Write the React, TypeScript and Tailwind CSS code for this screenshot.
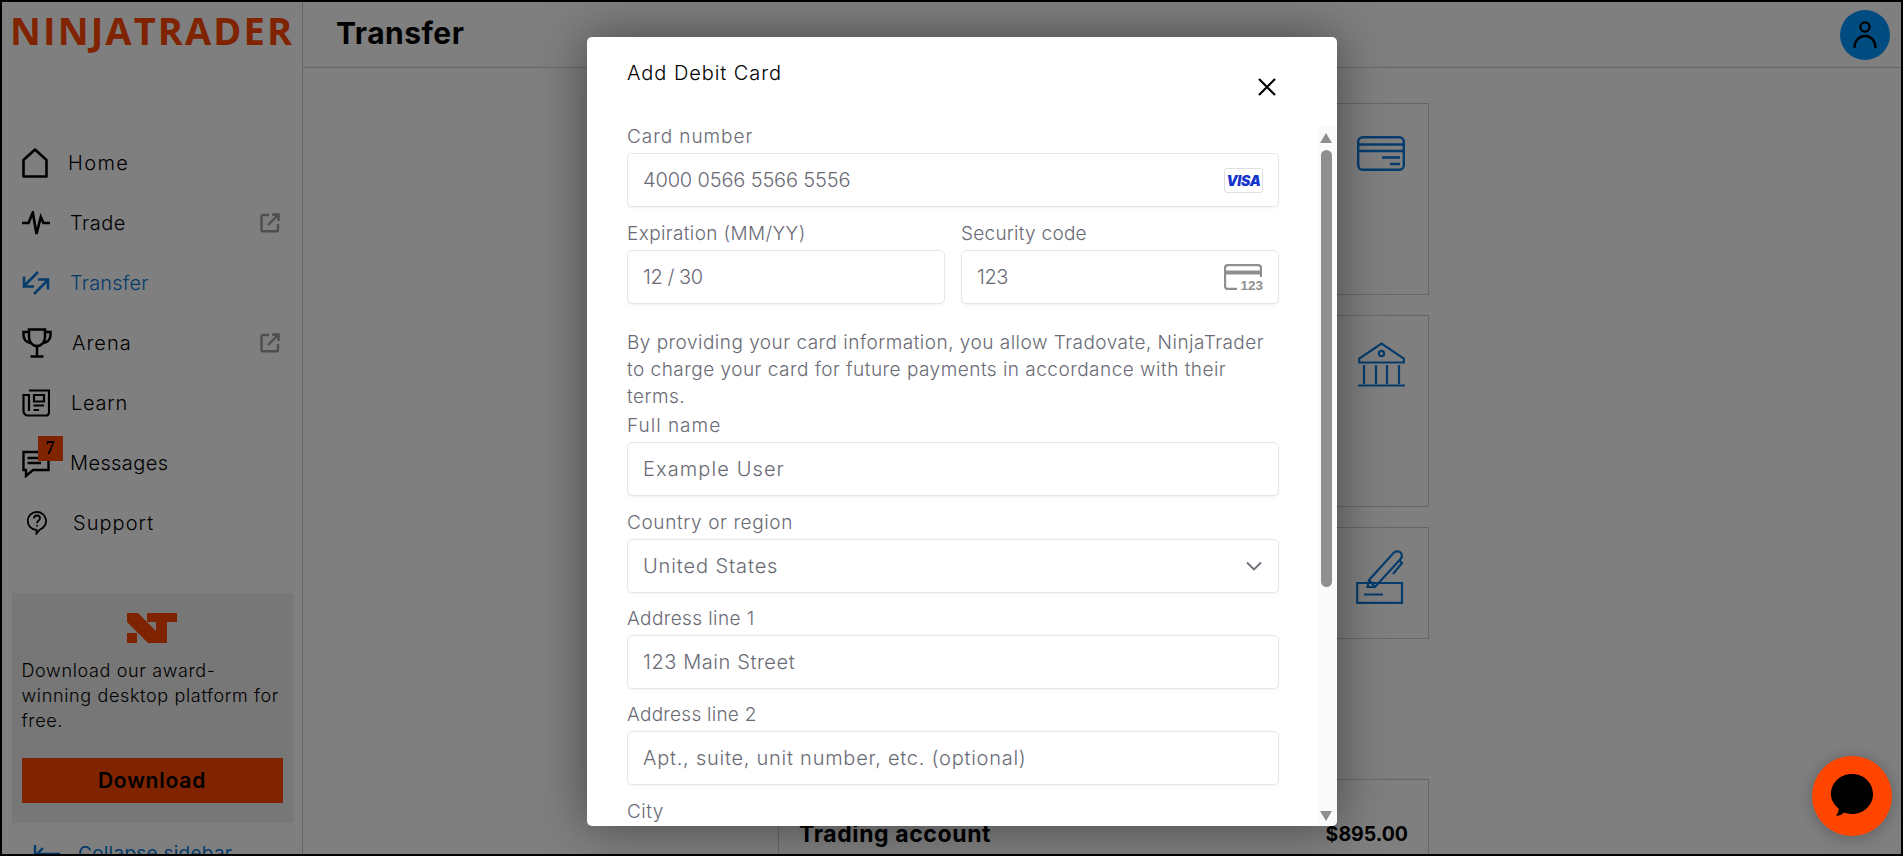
import React from "react";

const blue = "#0a78d6";

function Ext() {
  return (
    <svg width="20" height="20" viewBox="0 0 20 20" fill="none" stroke="#9c9c9c" strokeWidth="2.4" className="ml-auto mr-[22px]">
      <path d="M9 2H2.8a1.3 1.3 0 0 0-1.3 1.3V17a1.3 1.3 0 0 0 1.3 1.3h13.9a1.3 1.3 0 0 0 1.3-1.3v-6" />
      <path d="M8 12L18 2M12 1.5h6.5V8" />
    </svg>
  );
}

function Row({ icon, label, ml, ext, active }: { icon: React.ReactNode; label: string; ml: string; ext?: boolean; active?: boolean }) {
  return (
    <div className="flex h-[60px] items-center pl-[20px]">
      {icon}
      <span className={`${ml} text-[20px] font-light ${active ? "text-[#0a78d6]" : "text-black"}`}>{label}</span>
      {ext ? <Ext /> : null}
    </div>
  );
}

function Field({ label, tracking = "tracking-[0.45px]", children, className }: { label: string; tracking?: string; children: React.ReactNode; className?: string }) {
  return (
    <div className={className}>
      <div className={`mb-[6px] h-[20px] text-[19px] font-light leading-[20px] text-[#6a6b75] ${tracking}`}>{label}</div>
      {children}
    </div>
  );
}

function Box({ value, tracking = "tracking-[0.6px]", children }: { value: string; tracking?: string; children?: React.ReactNode }) {
  return (
    <div className="flex h-[54px] items-center rounded-[5px] border border-[#e6e6e6] bg-white pl-[15px] pr-[14px] shadow-[0_1px_1px_rgba(0,0,0,0.03),0_3px_6px_rgba(0,0,0,0.02)]">
      <input readOnly value={value} className={`min-w-0 flex-1 bg-transparent text-[20px] font-light text-[#6a6b75] outline-none ${tracking}`} />
      {children}
    </div>
  );
}

export default function App() {
  return (
    <div className="relative flex h-[856px] w-[1903px] overflow-hidden border-2 border-black bg-white font-[Inter,sans-serif]">
      {/* Sidebar */}
      <aside className="flex h-full w-[301px] shrink-0 flex-col overflow-hidden border-r border-[#cdcdcd]">
        <div className="h-[131px] shrink-0 pl-[8px] pt-[2px]">
          <span className="font-['Open_Sans',sans-serif] text-[38px] font-bold leading-[52px] tracking-[2.1px] text-[#ff4600]">NINJATRADER</span>
        </div>
        <nav className="flex shrink-0 flex-col">
          <Row
            label="Home"
            ml="ml-[20px] tracking-[1.4px]"
            icon={
              <svg width="26" height="30" viewBox="0 0 26 30" fill="none" stroke="black" strokeWidth="2.6" strokeLinejoin="round">
                <path d="M1.5 28.5V12L13 1.5L24.5 12V28.5Z" />
              </svg>
            }
          />
          <Row
            label="Trade"
            ml="ml-[20px] tracking-[0.5px]"
            ext
            icon={
              <svg width="28" height="24" viewBox="0 0 28 24" fill="none" stroke="black" strokeWidth="2.6" strokeLinejoin="miter">
                <path d="M0 12H6.5L10.8 1.5L14.5 23L18.8 6L21.5 12H28" />
              </svg>
            }
          />
          <Row
            label="Transfer"
            ml="ml-[20px] tracking-[0.2px]"
            active
            icon={
              <svg width="28" height="24" viewBox="0 0 28 24" fill="none" stroke={blue} strokeWidth="2.6">
                <path d="M16 1L2 15M2 5.5V15.5H12M12 23L26 9M16 8.5H26V18.5" />
              </svg>
            }
          />
          <Row
            label="Arena"
            ml="ml-[20px] tracking-[1px]"
            ext
            icon={
              <svg width="30" height="30" viewBox="0 0 30 30" fill="none" stroke="black" strokeWidth="2.5">
                <path d="M7 1.5H23V9C23 14 19.5 18 15 18C10.5 18 7 14 7 9Z" />
                <path d="M7 4H1.5V7C1.5 11 4 14 8.5 15M23 4H28.5V7C28.5 11 26 14 21.5 15M15 18V28M8.5 28.5H21.5" />
              </svg>
            }
          />
          <Row
            label="Learn"
            ml="ml-[21px] tracking-[0.75px]"
            icon={
              <svg width="28" height="28" viewBox="0 0 28 28" fill="none" stroke="black" strokeWidth="2.2">
                <path d="M7 1.5H27V23.5A3 3 0 0 1 24 26.5H6A4.5 4.5 0 0 1 1.5 22V6H7V22" />
                <path d="M12 6H22V12.5H12ZM11.5 16.5H22M11.5 21H17" />
              </svg>
            }
          />
          <div className="relative">
            <Row
              label="Messages"
              ml="ml-[20px] tracking-[0.4px]"
              icon={
                <svg width="28" height="28" viewBox="0 0 28 28" fill="none" stroke="black" strokeWidth="2.4" className="mt-[2px]">
                  <path d="M1.5 2H26.5V20H11L4 26V20H1.5Z" />
                  <path d="M5.5 8H19M5.5 13H19" />
                </svg>
              }
            />
            <span className="absolute left-[35.5px] top-[3px] flex h-[25px] w-[25px] items-center justify-center bg-[#ff4600] font-['Liberation_Serif',serif] text-[18px] font-bold text-black">7</span>
          </div>
          <Row
            label="Support"
            ml="ml-[26px] tracking-[1.05px]"
            icon={
              <svg width="20" height="24" viewBox="0 0 20 24" fill="none" stroke="black" strokeWidth="1.8" className="ml-[5px]">
                <path d="M10 1A9 9 0 0 1 13 18.5L9.5 22.5V19A9 9 0 0 1 10 1Z" />
                <path d="M7 7.5C7 5.5 8.5 4.5 10 4.5C11.8 4.5 13 5.7 13 7.2C13 9.5 10 9.5 10 12.2M10 14V15.5" />
              </svg>
            }
          />
        </nav>
        <div className="mx-[9.5px] mt-[40px] flex h-[230px] shrink-0 flex-col bg-[#eeeeee] px-[10px] pt-[20px]">
          <svg width="50" height="30" viewBox="0 0 50 30" fill="#ff4600" className="mx-auto shrink-0">
            <polygon points="0,0 11,0 30,19 30,30 21,30 0,9" />
            <polygon points="20,0 50,0 50,9 40,9 40,30 29,30 29,9 20,9" />
            <polygon points="0,20 10,20 10,30 0,30" />
          </svg>
          <p className="mt-[15px] whitespace-nowrap text-[18px] font-light leading-[25px] tracking-[0.65px] text-black">
            Download our award-
            <br />
            winning desktop platform for
            <br />
            free.
          </p>
          <button className="mt-[25px] h-[45px] w-full bg-[#ff4600] text-[21px] font-semibold tracking-[0.8px] text-black">Download</button>
        </div>
        <div className="mt-[17px] flex shrink-0 items-center pl-[31px]">
          <svg width="28" height="18" viewBox="0 0 28 18" fill="none" stroke={blue} strokeWidth="2.4" className="shrink-0">
            <path d="M2 0V18M27 9H4M10 3L4 9L10 15" />
          </svg>
          <span className="ml-[17px] whitespace-nowrap text-[19px] tracking-[0.25px] text-[#0a78d6]">Collapse sidebar</span>
        </div>
      </aside>

      {/* Main */}
      <main className="flex min-w-0 flex-1 flex-col">
        <header className="flex h-[66px] shrink-0 items-center justify-between border-b border-[#cdcdcd] pl-[33px] pr-[11px]">
          <h1 className="-mt-[2px] text-[30px] font-bold tracking-[0.5px] text-black">Transfer</h1>
          <div className="flex h-[50px] w-[50px] items-center justify-center rounded-full bg-[#0097ff]">
            <svg width="24" height="28" viewBox="0 0 24 28" fill="none" stroke="black" strokeWidth="2.3">
              <circle cx="12" cy="6" r="4.6" />
              <path d="M1.5 27C1.5 19.5 6 15 12 15C18 15 22.5 19.5 22.5 27" />
            </svg>
          </div>
        </header>
        <div className="ml-[475px] flex w-[651px] flex-col pt-[35px]">
          <div className="flex h-[192px] shrink-0 justify-end border border-[#cdcdcd] pr-[23px] pt-[32px]">
            <svg width="48" height="35" viewBox="0 0 48 35" fill="none" stroke={blue} strokeWidth="2.4" className="shrink-0">
              <rect x="1.2" y="1.2" width="45.6" height="32.6" rx="4.5" />
              <path d="M1 8.5H47M1 15H47M25 21.5H43M33 28H43" />
            </svg>
          </div>
          <div className="mt-[20px] flex h-[192px] shrink-0 justify-end border border-[#cdcdcd] pr-[23px] pt-[26px]">
            <svg width="47" height="45" viewBox="0 0 47 45" fill="none" stroke={blue} strokeWidth="2.2" className="shrink-0">
              <path d="M1.2 20.5V16.5L23.5 1.5L45.8 16.5V20.5Z" />
              <circle cx="23.5" cy="11.5" r="2.6" />
              <path d="M6 23V42M18 23V42M29 23V42M41 23V42M0 43.5H47" />
            </svg>
          </div>
          <div className="mt-[20px] flex h-[112px] shrink-0 justify-end border border-[#cdcdcd] pr-[24px] pt-[22px]">
            <svg width="48" height="54" viewBox="0 0 48 54" fill="none" stroke={blue} strokeWidth="2.2" className="shrink-0">
              <path d="M1.2 33H46V52.8H1.2Z" />
              <path d="M8 44.5H27M11.5 37L13 30L38 2.5C40 0.8 43.5 0.8 45 3C46.5 5.5 46 7.5 44.5 9L19 37ZM13 30L19 37M44 11L46 13L37 24" />
            </svg>
          </div>
          <div className="mt-[140px] flex h-[120px] shrink-0 items-start justify-between border border-[#cdcdcd] px-[20px] pt-[40px]">
            <span className="text-[23px] font-bold leading-[28px] tracking-[0.6px] text-black">Trading account</span>
            <span className="text-[19.5px] font-bold leading-[28px] text-black">$895.00</span>
          </div>
        </div>
      </main>

      {/* Dim layer and dialog */}
      <div className="absolute inset-0 bg-black/50">
        <div className="relative ml-[585px] mt-[35px] h-[789px] w-[750px] overflow-hidden rounded-[5px] bg-white shadow-[0_0_50px_rgba(0,0,0,0.45)]">
          <div className="pl-[40px] pr-[58px]">
            <div className="relative h-[90px] pt-[25px]">
              <h2 className="text-[20px] font-light leading-[22px] tracking-[0.95px] text-black">Add Debit Card</h2>
              <svg width="18" height="18" viewBox="0 0 18 18" fill="none" stroke="black" strokeWidth="2.2" className="absolute right-[3px] top-[41px]">
                <path d="M1 1L17 17M17 1L1 17" />
              </svg>
            </div>
            <Field label="Card number" tracking="tracking-[0.95px]">
              <Box value="4000 0566 5566 5556" tracking="tracking-[-0.15px]">
                <span className="mr-[1px] flex h-[25px] w-[39px] items-center justify-center rounded-[3px] border border-[#e0e0e0] bg-white text-[14px] font-black italic tracking-[-0.3px] text-[#1434cb]">VISA</span>
              </Box>
            </Field>
            <div className="-mb-[1px] mt-[17px] grid grid-cols-2 gap-[16px]">
              <Field label="Expiration (MM/YY)" tracking="tracking-[0.38px]">
                <Box value="12 / 30" tracking="tracking-[-0.45px]" />
              </Field>
              <Field label="Security code" tracking="tracking-[0.25px]">
                <Box value="123" tracking="tracking-[-0.45px]">
                  <span className="relative mr-[2px] h-[26px] w-[38px]">
                    <svg width="38" height="26" viewBox="0 0 38 26" fill="none" stroke="#8f8f8f" strokeWidth="2.3">
                      <path d="M37 13V4A3 3 0 0 0 34 1H4A3 3 0 0 0 1 4V22A3 3 0 0 0 4 25H13" />
                      <path d="M1 8.5H37" strokeWidth="4" />
                    </svg>
                    <span className="absolute bottom-[-3px] right-[-1px] font-['Liberation_Sans',sans-serif] text-[13.5px] font-bold leading-[15px] text-[#8f8f8f]">123</span>
                  </span>
                </Box>
              </Field>
            </div>
            <p className="mt-[26px] text-[19px] font-light leading-[27px] tracking-[0.48px] text-[#6a6b75]">By providing your card information, you allow Tradovate, NinjaTrader to charge your card for future payments in accordance with their terms.</p>
            <Field label="Full name" tracking="tracking-[1px]" className="mt-[6px]">
              <Box value="Example User" tracking="tracking-[1.1px]" />
            </Field>
            <Field label="Country or region" tracking="tracking-[0.62px]" className="mt-[16.5px]">
              <Box value="United States" tracking="tracking-[0.9px]">
                <svg width="16" height="10" viewBox="0 0 16 10" fill="none" stroke="#6d6e78" strokeWidth="1.8" className="mr-[2px]">
                  <path d="M1 1.5L8 8.5L15 1.5" />
                </svg>
              </Box>
            </Field>
            <Field label="Address line 1" tracking="tracking-[0.4px]" className="mt-[16px]">
              <Box value="123 Main Street" tracking="tracking-[0.58px]" />
            </Field>
            <Field label="Address line 2" tracking="tracking-[0.25px]" className="mt-[16.5px]">
              <Box value="Apt., suite, unit number, etc. (optional)" tracking="tracking-[0.75px]" />
            </Field>
            <Field label="City" className="mt-[16.5px]">
              <Box value="" />
            </Field>
          </div>

          {/* Scrollbar */}
          <div className="absolute bottom-0 right-0 top-[90px] flex w-[19px] flex-col items-center bg-[#fafafa] pr-[3px] pt-[6px]">
            <span className="h-0 w-0 border-x-[6.5px] border-b-[10px] border-x-transparent border-b-[#8f8f8f]" />
            <span className="mt-[7px] h-[437px] w-[11px] rounded-full bg-[#8f8f8f]" />
            <span className="mb-[5px] mt-auto h-0 w-0 border-x-[6.5px] border-t-[10px] border-x-transparent border-t-[#8f8f8f]" />
          </div>
        </div>
      </div>

      {/* Chat launcher */}
      <div className="absolute left-[1810px] top-[754px] flex h-[80px] w-[80px] items-center justify-center rounded-full bg-[#ff4500] shadow-[0_2px_16px_rgba(0,0,0,0.25)]">
        <svg width="42" height="44" viewBox="0 0 42 44" fill="black">
          <path d="M21 0C32.6 0 42 8.6 42 20C42 31.4 32.6 40 21 40C18 40 15.5 39.6 13 38.6C10.5 41 8 42 5 41.8C7 39.5 7.8 37 7.6 34.5C3 30.8 0 25.8 0 20C0 8.6 9.4 0 21 0Z" />
        </svg>
      </div>
    </div>
  );
}
